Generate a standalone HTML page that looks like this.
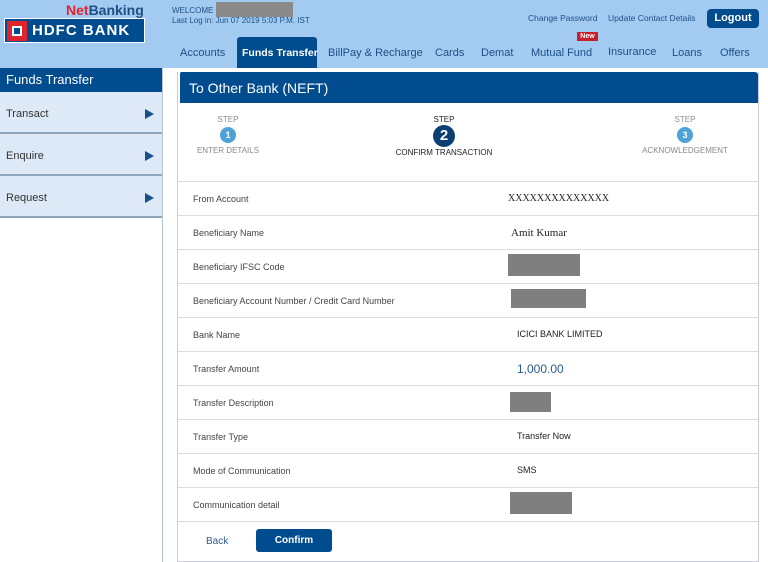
<!DOCTYPE html>
<html><head><style>
*{margin:0;padding:0;box-sizing:border-box}
body{width:768px;height:562px;overflow:hidden;background:#fff;font-family:"Liberation Sans",Arial,sans-serif;position:relative}
.hdr{position:absolute;left:0;top:0;width:768px;height:68px;background:#a3cbf1}
.abs{position:absolute}
.nav{position:absolute;top:47px;font-size:11px;color:#1d4f86}
.side{position:absolute;left:0;top:68px;width:163px;height:494px;border-right:1px solid #b8c4d0}
.sideh{height:24px;background:#004c8f;color:#fff;font-size:13px;padding:4px 0 0 6px}
.si{height:42px;background:#dde9f7;border-bottom:2px solid #8fa6be;font-size:11px;color:#333;padding:16px 0 0 6px;position:relative}
.si:after{content:"";position:absolute;right:8px;top:17px;border-left:9px solid #1a4f8a;border-top:5px solid transparent;border-bottom:5px solid transparent}
.main{position:absolute;left:177px;top:72px;width:582px;height:490px;border:1px solid #ccd;border-top:none}
.mh{height:31px;background:#004c8f;color:#fff;font-size:14px;padding:8px 0 0 9px;border-radius:3px 3px 0 0;border-left:2px solid #fff}
.steps{height:79px;border-bottom:1px solid #ddd;position:relative;font-size:8px;color:#888;text-align:center}
.st{position:absolute;top:12px;width:140px}
.c{width:16px;height:16px;border-radius:50%;background:#4ea2d8;color:#fff;font-size:9px;font-weight:bold;line-height:16px;margin:3px auto 3px}
.row{height:34px;border-bottom:1px solid #ddd;position:relative;font-size:9px;color:#444}
.row .l{position:absolute;left:15px;top:12px}
.row .v{position:absolute;left:330px;top:11px;font-size:10px;color:#222}
.gb{position:absolute;background:#7f7f7f;height:20px;top:5px}
</style></head><body>
<div class="hdr"></div>
<div class="abs" style="left:66px;top:2px;font-size:14px;font-weight:bold;color:#1d4f86"><span style="color:#e0242d">Net</span>Banking</div>
<div class="abs" style="left:4px;top:18px;width:141px;height:25px;background:#004c8f;border:1px solid #fff"></div>
<div class="abs" style="left:7px;top:21px;width:20px;height:20px;background:#e0242d"></div>
<div class="abs" style="left:12px;top:26px;width:10px;height:10px;background:#fff"></div>
<div class="abs" style="left:14px;top:28px;width:6px;height:6px;background:#004c8f"></div>
<div class="abs" style="left:32px;top:22px;color:#fff;font-weight:bold;font-size:15px;letter-spacing:1px">HDFC BANK</div>
<div class="abs" style="left:172px;top:6px;font-size:8px;color:#1d4f86">WELCOME</div>
<div class="abs" style="left:216px;top:2px;width:77px;height:15px;background:#8a8a8a"></div>
<div class="abs" style="left:172px;top:16px;font-size:8px;color:#1d4f86">Last Log in: Jun 07 2019 5:03 P.M. IST</div>
<div class="abs" style="left:528px;top:13px;font-size:8.5px;color:#1d4f86">Change Password</div>
<div class="abs" style="left:608px;top:13px;font-size:8.5px;color:#1d4f86">Update Contact Details</div>
<div class="abs" style="left:707px;top:9px;width:52px;height:19px;background:#004c8f;border-radius:4px;color:#fff;font-size:11px;font-weight:bold;text-align:center;line-height:19px">Logout</div>
<div class="abs" style="left:237px;top:37px;width:80px;height:31px;background:#004c8f;border-radius:3px 3px 0 0"></div>
<div class="nav" style="left:180px">Accounts</div>
<div class="nav" style="left:242px;color:#fff;font-weight:bold;font-size:10.5px">Funds Transfer</div>
<div class="nav" style="left:328px">BillPay &amp; Recharge</div>
<div class="nav" style="left:435px">Cards</div>
<div class="nav" style="left:481px">Demat</div>
<div class="nav" style="left:531px">Mutual Fund</div>
<div class="abs" style="left:577px;top:32px;width:21px;height:9px;background:#c8202a;color:#fff;font-size:7px;font-weight:bold;text-align:center;line-height:9px">New</div>
<div class="nav" style="left:608px;top:46px">Insurance</div>
<div class="nav" style="left:672px">Loans</div>
<div class="nav" style="left:720px">Offers</div>
<div class="side"><div class="sideh">Funds Transfer</div>
<div class="si">Transact</div><div class="si">Enquire</div><div class="si">Request</div></div>
<div class="main">
<div class="mh">To Other Bank (NEFT)</div>
<div class="steps">
<div class="st" style="left:-20px">STEP<div class="c">1</div>ENTER DETAILS</div>
<div class="st" style="left:196px;color:#222">STEP<div class="c" style="width:22px;height:22px;line-height:22px;font-size:15px;background:#0c3f72;margin:1px auto 1px">2</div>CONFIRM TRANSACTION</div>
<div class="st" style="left:437px">STEP<div class="c">3</div>ACKNOWLEDGEMENT</div>
</div>
<div class="row"><span class="l">From Account</span><span class="v" style="font-family:'Liberation Serif',serif;left:330px">XXXXXXXXXXXXXX</span></div>
<div class="row"><span class="l">Beneficiary Name</span><span class="v" style="font-family:'Liberation Serif',serif;left:333px;font-size:11px">Amit Kumar</span></div>
<div class="row"><span class="l">Beneficiary IFSC Code</span><div class="gb" style="left:330px;width:72px;top:4px;height:22px"></div></div>
<div class="row"><span class="l">Beneficiary Account Number / Credit Card Number</span><div class="gb" style="left:333px;width:75px;top:5px;height:19px"></div></div>
<div class="row"><span class="l">Bank Name</span><span class="v" style="left:339px;font-size:9px">ICICI BANK LIMITED</span></div>
<div class="row"><span class="l">Transfer Amount</span><span class="v" style="left:339px;font-size:12px;color:#2a5b8f;top:10px">1,000.00</span></div>
<div class="row"><span class="l">Transfer Description</span><div class="gb" style="left:332px;width:41px;top:6px"></div></div>
<div class="row"><span class="l">Transfer Type</span><span class="v" style="left:339px;font-size:9px">Transfer Now</span></div>
<div class="row"><span class="l">Mode of Communication</span><span class="v" style="left:339px;font-size:9px">SMS</span></div>
<div class="row"><span class="l">Communication detail</span><div class="gb" style="left:332px;width:62px;top:4px;height:22px"></div></div>
<div style="position:relative;height:40px">
<span class="abs" style="left:28px;top:14px;font-size:10px;color:#2a5b8f">Back</span>
<div class="abs" style="left:78px;top:7px;width:76px;height:23px;background:#004c8f;border-radius:3px;color:#fff;font-size:10px;font-weight:bold;text-align:center;line-height:23px">Confirm</div>
</div>
</div>
</body></html>
